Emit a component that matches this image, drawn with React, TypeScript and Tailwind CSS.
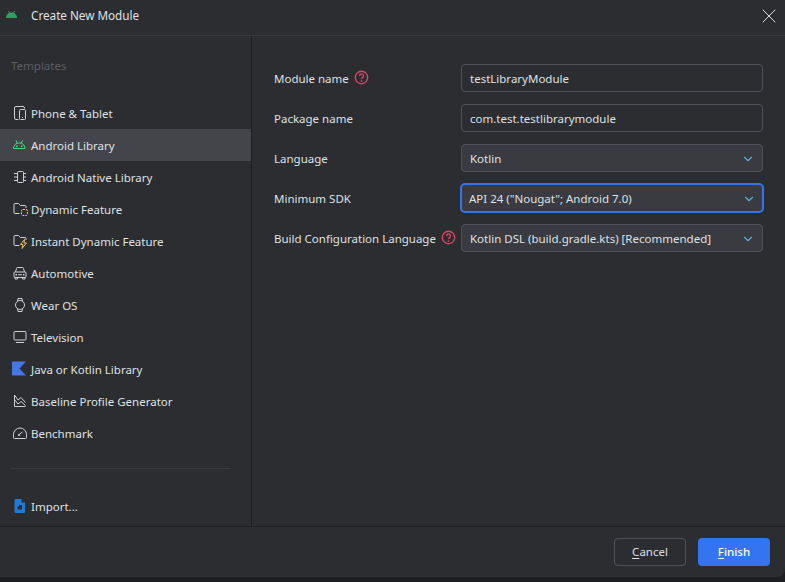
import { X, ChevronDown } from 'lucide-react';
import type { ReactNode } from 'react';

const stroke = { fill: 'none', stroke: '#ced0d6', strokeWidth: 1 };

function Icon({ children }: { children: ReactNode }) {
  return (
    <svg width="16" height="16" viewBox="0 0 16 16" className="shrink-0">
      {children}
    </svg>
  );
}

function AndroidIcon() {
  const color = '#3ddc84';
  return (
    <Icon>
      <path d="M4 3.5 L5.2 6 M10.5 3.5 L9.3 6" stroke={color} strokeWidth="1" fill="none" />
      <path d="M1.5 11.5 C1.5 8 4 6 7.25 6 C10.5 6 13 8 13 11.5 Z" fill="none" stroke={color} />
      <rect x="4" y="8.5" width="1.5" height="1.5" fill={color} />
      <rect x="9" y="8.5" width="1.5" height="1.5" fill={color} />
    </Icon>
  );
}

const items: { label: string; icon: ReactNode }[] = [
  {
    label: 'Phone & Tablet',
    icon: (
      <Icon>
        <path d="M6.5 14.5 H4 a1.5 1.5 0 0 1 -1.5 -1.5 V3 A1.5 1.5 0 0 1 4 1.5 H11 A1.5 1.5 0 0 1 12.5 3 V3.5" {...stroke} />
        <rect x="7.5" y="4.5" width="6" height="10" rx="1" {...stroke} />
        <path d="M10 12.5 H11" {...stroke} />
      </Icon>
    ),
  },
  { label: 'Android Library', icon: <AndroidIcon /> },
  {
    label: 'Android Native Library',
    icon: (
      <Icon>
        <rect x="5.5" y="2.5" width="6" height="11" rx="1" {...stroke} />
        <path d="M2 4.5 H5.5 M2 8 H5.5 M2 11.5 H5.5 M11.5 4.5 H14 M11.5 8 H14 M11.5 11.5 H14" {...stroke} />
      </Icon>
    ),
  },
  {
    label: 'Dynamic Feature',
    icon: (
      <Icon>
        <path d="M7.5 12.5 H3 a1 1 0 0 1 -1 -1 V3.5 a1 1 0 0 1 1 -1 H6.5 L8.5 4.5 H13 a1 1 0 0 1 1 1 V7" {...stroke} />
        <rect x="9.5" y="8.5" width="6" height="6" rx="1.5" fill="none" stroke="#f2c55c" strokeDasharray="2 1" />
      </Icon>
    ),
  },
  {
    label: 'Instant Dynamic Feature',
    icon: (
      <Icon>
        <path d="M7.5 12.5 H3 a1 1 0 0 1 -1 -1 V3.5 a1 1 0 0 1 1 -1 H6.5 L8.5 4.5 H13 a1 1 0 0 1 1 1 V7" {...stroke} />
        <path d="M12.5 6.5 L8.5 11.5 H11 L10 15.5 L14.5 10 H12 Z" fill="none" stroke="#f2c55c" />
      </Icon>
    ),
  },
  {
    label: 'Automotive',
    icon: (
      <Icon>
        <path d="M3.5 7 L4.5 3.5 a1 1 0 0 1 1 -1 H10.5 a1 1 0 0 1 1 1 L12.5 7" {...stroke} />
        <rect x="2" y="7" width="12" height="5.5" rx="1" {...stroke} />
        <path d="M3 12.5 V14 H5.5 V12.5 M10.5 12.5 V14 H13 V12.5 M6 9.75 H10" {...stroke} />
        <rect x="3.5" y="9" width="1.5" height="1.5" fill="#ced0d6" />
        <rect x="11" y="9" width="1.5" height="1.5" fill="#ced0d6" />
      </Icon>
    ),
  },
  {
    label: 'Wear OS',
    icon: (
      <Icon>
        <circle cx="8" cy="8" r="4.5" {...stroke} />
        <path d="M5.5 4 L6 1.5 H10 L10.5 4 M5.5 12 L6 14.5 H10 L10.5 12" {...stroke} />
      </Icon>
    ),
  },
  {
    label: 'Television',
    icon: (
      <Icon>
        <rect x="2" y="2.5" width="12" height="8.5" rx="1" {...stroke} />
        <path d="M4 13.5 H12" {...stroke} />
      </Icon>
    ),
  },
  {
    label: 'Java or Kotlin Library',
    icon: (
      <Icon>
        <path d="M0 0.5 H14 L7.5 7.5 L14 14.5 H0 Z" fill="#4677e6" />
      </Icon>
    ),
  },
  {
    label: 'Baseline Profile Generator',
    icon: (
      <Icon>
        <path d="M2.5 2 L6 7 L9 4.5 L13.5 9.5" {...stroke} />
        <path d="M2.5 6.5 L6 11 L9 8.5 L13.5 12.5" {...stroke} />
        <path d="M2.5 2 V13.5 H13.5" {...stroke} />
      </Icon>
    ),
  },
  {
    label: 'Benchmark',
    icon: (
      <Icon>
        <path d="M2.5 13.5 a1 1 0 0 1 -1 -1 V9.5 a6.5 6.5 0 0 1 13 0 V12.5 a1 1 0 0 1 -1 1 Z" {...stroke} />
        <path d="M6.5 10 L10.5 7" {...stroke} />
        <circle cx="7" cy="10" r="1" fill="#ced0d6" />
      </Icon>
    ),
  },
];

function SideItem({ label, icon, selected }: { label: string; icon: ReactNode; selected?: boolean }) {
  return (
    <div className={`flex h-8 items-center gap-[3px] pl-3 ${selected ? 'bg-[#43454a]' : ''}`}>
      {icon}
      <span className="pt-[2px] text-[11.5px] text-[#dfe1e5]">{label}</span>
    </div>
  );
}

function HelpIcon() {
  return (
    <svg width="15" height="15" viewBox="0 0 16 16" className="mb-0.5 shrink-0">
      <circle cx="8" cy="8" r="6.6" fill="none" stroke="#d9476b" strokeWidth="1.5" />
      <path d="M5.9 6.4 a2.1 2.1 0 1 1 3.2 1.7 C8.3 8.6 8 8.9 8 9.8" fill="none" stroke="#d9476b" strokeWidth="1.4" />
      <rect x="7.2" y="10.8" width="1.6" height="1.6" fill="#d9476b" />
    </svg>
  );
}

function Row({ label, help, children }: { label: string; help?: boolean; children: ReactNode }) {
  return (
    <div className="flex h-7 items-center">
      <div className="flex w-[187px] items-center gap-[5px] whitespace-nowrap">
        <span className="pt-[2px] text-[11.5px] text-[#dfe1e5]">{label}</span>
        {help && <HelpIcon />}
      </div>
      {children}
    </div>
  );
}

function TextField({ value }: { value: string }) {
  return (
    <div className="flex h-7 w-[302px] items-center rounded-[4px] border border-[#4e5157] pl-2 text-[11.5px] text-[#dfe1e5]">
      <span className="pt-[2px]">{value}</span>
    </div>
  );
}

function Select({ value, focused }: { value: string; focused?: boolean }) {
  return (
    <div
      className={`flex h-7 w-[302px] items-center justify-between rounded-[4px] bg-[#393b40] pl-2 pr-[7px] text-[11.5px] text-[#dfe1e5] ${
        focused ? 'outline-2 -outline-offset-1 outline-[#3574f0]' : 'border border-[#4e5157]'
      }`}
    >
      <span className="pt-[2px]">{value}</span>
      <ChevronDown size={14} strokeWidth={2} className="mt-px text-[#4eb1e0]" />
    </div>
  );
}

export default function App() {
  return (
    <div className="h-[582px] w-[785px] overflow-hidden bg-[#1e1f22] font-['Noto_Sans',sans-serif]">
      <div className="flex h-[577px] flex-col rounded-br-lg bg-[#2b2d30]">
        <div className="flex h-9 shrink-0 items-center border-b border-[#393b40] pb-1 pl-[6px] pr-[4px]">
          <svg width="11" height="7" viewBox="0 0 11 7" className="mb-[3px] shrink-0">
            <path d="M2.5 0 L3.5 2 M8.5 0 L7.5 2" stroke="#2f9e5f" fill="none" />
            <path d="M0 7 C0 3.5 2.5 1.5 5.5 1.5 C8.5 1.5 11 3.5 11 7 Z" fill="#2f9e5f" />
          </svg>
          <span className="ml-[14px] text-[11.7px] text-[#dfe1e5]">Create New Module</span>
          <X size={24} strokeWidth={1} className="ml-auto text-[#dfe1e5]" />
        </div>

        <div className="flex min-h-0 flex-1 border-b border-[#1e1f22]">
          <aside className="flex w-[252px] shrink-0 flex-col border-r border-[#1e1f22]">
            <div className="pl-[11px] pt-[21px] text-[11.5px] leading-[18px] text-[#5a5d63]">Templates</div>
            <div className="mt-[22px] flex flex-col">
              <SideItem {...items[0]} />
              <SideItem {...items[1]} selected />
              {items.slice(2).map((item) => (
                <SideItem key={item.label} {...item} />
              ))}
            </div>
            <div className="ml-[11px] mt-[19px] h-px w-[220px] bg-[#393b40]" />
            <div className="mt-[21px]">
              <SideItem
                label="Import..."
                icon={
                  <Icon>
                    <path d="M3.5 1 H9.5 L13 4.5 V14 a1 1 0 0 1 -1 1 H3.5 a1 1 0 0 1 -1 -1 V2 a1 1 0 0 1 1 -1 Z" fill="#1f7ad8" />
                    <path d="M9.5 1 V4.5 H13 Z" fill="#2b2d30" />
                    <path d="M7 7 H10 V11.5 H5.5 V8.5 H7 Z" fill="#2b2d30" />
                  </Icon>
                }
              />
            </div>
          </aside>

          <main className="flex flex-1 flex-col gap-3 pl-[22px] pt-7">
            <Row label="Module name" help>
              <TextField value="testLibraryModule" />
            </Row>
            <Row label="Package name">
              <TextField value="com.test.testlibrarymodule" />
            </Row>
            <Row label="Language">
              <Select value="Kotlin" />
            </Row>
            <Row label="Minimum SDK">
              <Select value={'API 24 ("Nougat"; Android 7.0)'} focused />
            </Row>
            <Row label="Build Configuration Language" help>
              <Select value="Kotlin DSL (build.gradle.kts) [Recommended]" />
            </Row>
          </main>
        </div>

        <div className="flex h-[50px] shrink-0 items-center justify-end gap-3 pr-[15px]">
          <button className="h-7 w-[72px] rounded-[4px] border border-[#4e5157] text-[11.5px] text-[#dfe1e5]">
            <span className="underline underline-offset-2">C</span>ancel
          </button>
          <button className="h-7 w-[72px] rounded-[4px] bg-[#3574f0] text-[11.5px] font-medium text-white">
            <span className="underline underline-offset-2">F</span>inish
          </button>
        </div>
      </div>
    </div>
  );
}
